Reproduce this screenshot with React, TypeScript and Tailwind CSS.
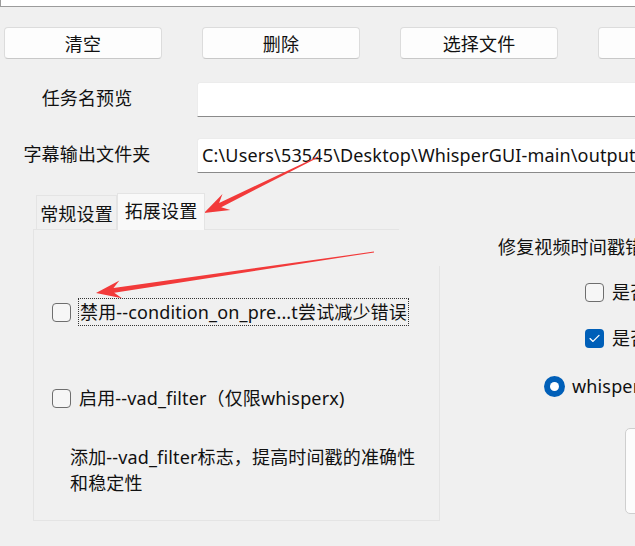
import React from "react";

function arrowPoints(tx: number, ty: number, hx: number, hy: number) {
  const dx = hx - tx;
  const dy = hy - ty;
  const len = Math.hypot(dx, dy);
  const ux = dx / len;
  const uy = dy / len;
  const px = -uy;
  const py = ux;
  const bx = hx - ux * 18;
  const by = hy - uy * 18;
  const gx = hx - ux * 25;
  const gy = hy - uy * 25;
  const pts: [number, number][] = [
    [tx + px * 0.4, ty + py * 0.4],
    [bx + px * 2.4, by + py * 2.4],
    [gx + px * 9, gy + py * 9],
    [hx, hy],
    [gx - px * 9, gy - py * 9],
    [bx - px * 2.4, by - py * 2.4],
    [tx - px * 0.4, ty - py * 0.4],
  ];
  return pts.map((p) => `${p[0].toFixed(1)},${p[1].toFixed(1)}`).join(" ");
}

function Check({ checked = false }: { checked?: boolean }) {
  if (checked) {
    return (
      <div className="w-[19px] h-[19px] flex-none rounded-[4px] bg-[#005fb8] flex items-center justify-center">
        <svg width="11" height="9" viewBox="0 0 11 9" fill="none">
          <path d="M1 4.6 L4 7.4 L10 1.4" stroke="white" strokeWidth="1.3" strokeLinecap="round" strokeLinejoin="round" />
        </svg>
      </div>
    );
  }
  return <div className="w-[19px] h-[19px] flex-none rounded-[4px] border border-[#6e6e6e] bg-[#f6f6f6]" />;
}

function Btn({ label }: { label: string }) {
  return (
    <div className="w-[158px] h-[32px] flex-none rounded-[4px] bg-[#fdfdfd] border border-[#dcdcdc] border-b-[#c8c8c8] flex items-center justify-center pt-[2px]">
      {label}
    </div>
  );
}

export default function App() {
  return (
    <div className="relative w-[635px] h-[546px] overflow-hidden bg-[#f0f0f0] text-[18px] leading-[26px] tracking-[0.15px] text-[#111] font-['Noto_Sans','Noto_Sans_CJK_SC',sans-serif]">
      <div className="h-[7px] bg-white border-l border-b border-[#9c9c9c]" />

      <div className="mt-[20px] ml-[4px] flex gap-[40px]">
        <Btn label="清空" />
        <Btn label="删除" />
        <Btn label="选择文件" />
        <Btn label="" />
      </div>

      <div className="mt-[23px] flex h-[35px] items-center">
        <div className="w-[174px] flex-none text-center pb-[3px]">任务名预览</div>
        <div className="ml-[23px] flex-1 h-full bg-white border-t border-l border-[#ececec] border-b border-b-[#8a8a8a] rounded-tl-[3px]" />
      </div>

      <div className="mt-[21px] flex h-[35px] items-center">
        <div className="w-[174px] flex-none text-center pb-[3px]">字幕输出文件夹</div>
        <div className="ml-[23px] flex-1 h-full bg-white border-t border-l border-[#ececec] border-b border-b-[#8a8a8a] rounded-tl-[3px] flex items-center pl-[4px] pb-[1px] whitespace-nowrap overflow-hidden">
          C:\Users\53545\Desktop\WhisperGUI-main\output
        </div>
      </div>

      <div className="mt-[20px] flex">
        <div className="ml-[33px] w-[407px] flex-none flex flex-col">
          <div className="flex items-end h-[36px] pl-[3px]">
            <div className="w-[81px] h-[34px] flex-none border border-b-0 border-[#e4e4e4] bg-[#f0f0f0] flex items-center justify-center pt-[2px]">
              常规设置
            </div>
            <div className="relative z-10 -mb-px w-[88px] h-[37px] flex-none border border-b-0 border-[#e4e4e4] bg-[#f9f9f9] flex items-center justify-center pb-[2px]">
              拓展设置
            </div>
          </div>
          <div className="relative h-[292px] border border-[#e4e4e4] flex flex-col">
            <div className="absolute -top-px -right-px w-[41px] h-[37px] bg-[#f0f0f0]" />
            <div className="mt-[68px] pl-[18px] flex items-center h-[28px]">
              <Check />
              <div className="ml-[7px] h-[28px] border border-dotted border-[#333] flex items-center px-[1px] whitespace-nowrap">
                禁用--condition_on_pre...t尝试减少错误
              </div>
            </div>
            <div className="mt-[58px] pl-[18px] flex items-center h-[28px]">
              <Check />
              <div className="ml-[8px] whitespace-nowrap">启用--vad_filter（仅限whisperx)</div>
            </div>
            <div className="mt-[32px] pl-[36px]">
              添加--vad_filter标志，提高时间戳的准确性
              <br />
              和稳定性
            </div>
          </div>
        </div>

        <div className="flex-1 flex flex-col whitespace-nowrap">
          <div className="mt-[41px] pl-[58px]">修复视频时间戳错误</div>
          <div className="mt-[19px] pl-[145px] flex items-center h-[26px]">
            <Check />
            <div className="ml-[8px]">是否修复</div>
          </div>
          <div className="mt-[20px] pl-[145px] flex items-center h-[26px]">
            <Check checked />
            <div className="ml-[8px]">是否保留</div>
          </div>
          <div className="mt-[22px] pl-[104px] flex items-center h-[26px]">
            <div className="w-[21px] h-[21px] flex-none rounded-full bg-[#005fb8] flex items-center justify-center">
              <div className="w-[9px] h-[9px] rounded-full bg-white" />
            </div>
            <div className="ml-[7px]">whisperx</div>
          </div>
          <div className="mt-[29px] ml-[185px] h-[86px] rounded-[5px] border border-[#cfcfcf] bg-[#fcfcfc]" />
        </div>
      </div>

      <svg className="absolute left-0 top-0 pointer-events-none" width="635" height="546">
        <polygon points={arrowPoints(318, 157, 204, 213)} fill="#f23a3a" />
        <polygon points={arrowPoints(374, 252, 96, 293)} fill="#f23a3a" />
      </svg>
    </div>
  );
}
